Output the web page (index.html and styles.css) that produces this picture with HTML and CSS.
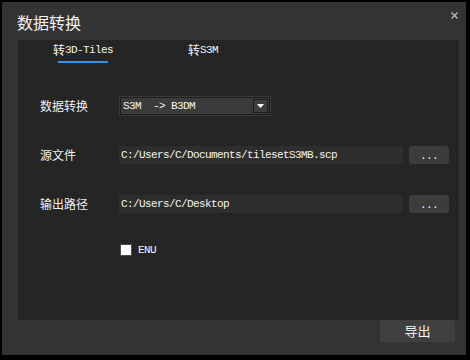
FILE: index.html
```html
<!DOCTYPE html>
<html lang="zh-CN">
<head>
<meta charset="utf-8">
<title>数据转换</title>
<link rel="stylesheet" href="styles.css">
</head>
<body>
<div class="dialog">
  <div class="header">
    <span class="title">数据转换</span>
    <svg class="close" width="7" height="7" viewBox="0 0 7 7"><path d="M0.5 0.5 L6.5 6.5 M6.5 0.5 L0.5 6.5" stroke="#c0c0c0" stroke-width="1.1" fill="none"/></svg>
  </div>
  <div class="panel">
    <div class="tabs">
      <div class="tab active"><span class="tab-text"><span class="cjk">转</span>3D-Tiles</span><span class="tab-line"></span></div>
      <div class="tab"><span class="tab-text"><span class="cjk">转</span>S3M</span></div>
    </div>
    <div class="form">
      <div class="row">
        <span class="label">数据转换</span>
        <div class="combo">
          <span class="combo-text">S3M&nbsp;&nbsp;-&gt; B3DM</span>
          <span class="combo-btn"><svg width="7" height="4" viewBox="0 0 7 4"><path d="M0 0 H7 L3.5 4 Z" fill="#ffffff"/></svg></span>
        </div>
      </div>
      <div class="row">
        <span class="label">源文件</span>
        <div class="input">C:/Users/C/Documents/tilesetS3MB.scp</div>
        <div class="browse">...</div>
      </div>
      <div class="row">
        <span class="label">输出路径</span>
        <div class="input">C:/Users/C/Desktop</div>
        <div class="browse">...</div>
      </div>
      <div class="row check-row">
        <span class="label"></span>
        <span class="checkbox"></span>
        <span class="check-label">ENU</span>
      </div>
    </div>
  </div>
  <div class="footer">
    <div class="export">导出</div>
  </div>
</div>
</body>
</html>
```

FILE: styles.css
```css
html, body {
  margin: 0;
  padding: 0;
  background: #000000;
}
body {
  width: 470px;
  height: 360px;
  overflow: hidden;
  font-family: "Noto Sans CJK SC", "Noto Sans", sans-serif;
  color: #f0f0f0;
}
.dialog {
  margin: 2px;
  width: 464px;
  height: 353px;
  background: #333333;
  display: flex;
  flex-direction: column;
}
.header {
  height: 38px;
  box-sizing: border-box;
  padding: 0 8px 0 15px;
  display: flex;
  justify-content: space-between;
  align-items: flex-start;
}
.title {
  font-size: 16px;
  line-height: 20px;
  margin-top: 10px;
  color: #f4f4f4;
}
.close {
  margin-top: 10px;
}
.panel {
  margin: 0 7px 0 16px;
  height: 280px;
  background: #252525;
  display: flex;
  flex-direction: column;
}
.tabs {
  display: flex;
  gap: 75px;
  padding: 3px 0 0 35px;
}
.tab {
  display: flex;
  flex-direction: column;
  color: #f4f4f4;
}
.tab.active { width: 60px; }
.tab-text {
  display: flex;
  align-items: center;
  height: 14px;
  line-height: 14px;
  font-family: "Liberation Mono", monospace;
  font-size: 11px;
  letter-spacing: -0.6px;
  white-space: nowrap;
}
.cjk {
  font-family: "Noto Sans CJK SC", sans-serif;
  font-size: 12px;
  line-height: 14px;
  letter-spacing: 0;
}
.tab-line {
  display: block;
  margin: 4px 0 0 5px;
  width: 50px;
  height: 2px;
  background: #3592e6;
}
.form {
  margin-top: 34px;
  padding-left: 22px;
  display: flex;
  flex-direction: column;
  gap: 31px;
}
.row {
  display: flex;
  align-items: center;
  height: 18px;
}
.check-row { height: 12px; }
.label {
  width: 79px;
  font-size: 12px;
  line-height: 14px;
  color: #f0f0f0;
  flex: none;
}
.combo {
  width: 148px;
  height: 16px;
  border: 1px solid #1c1c1c;
  box-shadow: 0 0 0 1px #3a3a3a;
  margin-left: 1px;
  background: #3b3b3b;
  display: flex;
  align-items: center;
  justify-content: space-between;
}
.combo-text {
  padding-left: 2px;
  font-family: "Liberation Mono", monospace;
  font-size: 11px;
  letter-spacing: -0.6px;
  color: #f4f4f4;
  white-space: nowrap;
}
.combo-btn {
  width: 13px;
  height: 12px;
  margin-right: 1px;
  border: 1px solid #1c1c1c;
  background: #3d3d3d;
  display: flex;
  align-items: center;
  justify-content: center;
}
.input {
  width: 284px;
  height: 18px;
  box-sizing: border-box;
  padding-left: 2px;
  background: #2e2e2e;
  font-family: "Liberation Mono", monospace;
  font-size: 11px;
  line-height: 18px;
  letter-spacing: -0.6px;
  color: #f4f4f4;
  white-space: nowrap;
}
.browse {
  margin-left: 6px;
  width: 40px;
  height: 18px;
  border-radius: 3px;
  background: #3c3c3c;
  font-family: "Liberation Mono", monospace;
  font-size: 11px;
  line-height: 20px;
  letter-spacing: -0.6px;
  text-align: center;
  color: #f4f4f4;
}
.checkbox {
  margin-left: 1px;
  width: 12px;
  height: 12px;
  box-sizing: border-box;
  border: 1px solid #4a4a4a;
  background: #ffffff;
}
.check-label {
  margin-left: 6px;
  font-family: "Liberation Mono", monospace;
  font-size: 11px;
  letter-spacing: -0.6px;
  color: #f4f4f4;
}
.footer {
  display: flex;
  justify-content: flex-end;
  padding-right: 11px;
}
.export {
  width: 75px;
  height: 22px;
  border-radius: 3px;
  background: #404040;
  font-size: 13px;
  line-height: 22px;
  text-align: center;
  color: #f4f4f4;
}
```
